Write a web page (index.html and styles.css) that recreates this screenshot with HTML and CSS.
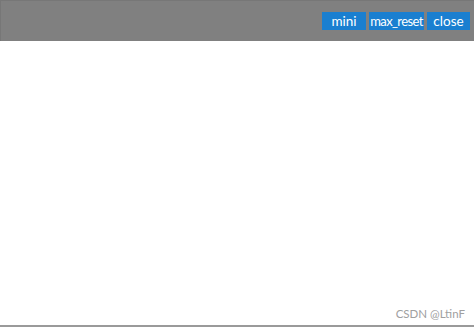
FILE: index.html
```html
<!DOCTYPE html>
<html lang="en">
<head>
  <meta charset="UTF-8" />
  <title>Frameless Window</title>
  <link rel="stylesheet" href="styles.css">
</head>
<body>

  <!-- Title Bar -->
  <div class="title-bar">
    <button class="title-btn btn-mini">mini</button>
    <button class="title-btn btn-max">max_reset</button>
    <button class="title-btn btn-close">close</button>
  </div>

  <!-- Content -->
  <div class="content">
    <span class="watermark">CSDN @LtinF</span>
  </div>

  <div class="bottom-line"></div>

</body>
</html>
```

FILE: styles.css
```css
* {
  margin: 0;
  padding: 0;
  box-sizing: border-box;
  font-family: 'Lato', 'Noto Sans', sans-serif;
}
html, body {
  width: 474px;
  height: 327px;
  overflow: hidden;
}
body {
  background: #ffffff;
  display: flex;
  flex-direction: column;
}
.title-bar {
  background-color: #808080;
  height: 41px;
  border-left: 1px solid #777777;
  border-top: 1px solid #777777;
  display: flex;
  justify-content: flex-end;
  align-items: center;
  gap: 3px;
  padding-right: 4px;
}
.title-btn {
  background-color: #1a7fd0;
  color: #ffffff;
  border: none;
  height: 18px;
  padding: 0;
  font-size: 13.5px;
  line-height: 18px;
  text-align: center;
  white-space: nowrap;
}
.btn-mini {
  width: 44px;
}
.btn-max {
  width: 55px;
  font-size: 13px;
  letter-spacing: -0.6px;
}
.btn-close {
  width: 43px;
}
.content {
  flex: 1;
  display: flex;
  align-items: flex-end;
  justify-content: flex-end;
  padding: 0 9px 5px 0;
}
.watermark {
  color: #a0a0a0;
  font-size: 11.5px;
}
.bottom-line {
  height: 2px;
  background-color: #9a9a9a;
}
```
